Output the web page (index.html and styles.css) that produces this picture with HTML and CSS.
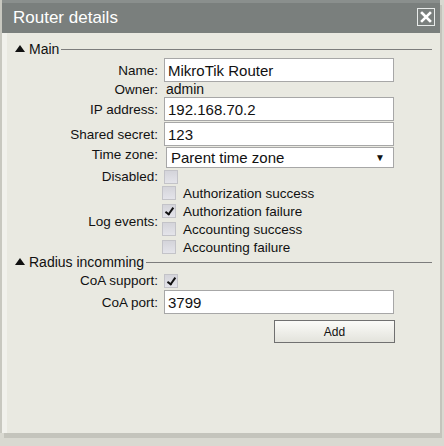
FILE: index.html
```html
<!DOCTYPE html>
<html lang="en">
  <head>
    <meta charset="UTF-8" />
    <title>Router details</title>
    <link rel="stylesheet" href="styles.css">
  </head>
  <body>
    <div class="window">
      <div class="window-title">
        <span>Router details</span>
        <span class="close-btn">
          <svg width="12" height="12" viewBox="0 0 12 12">
            <path d="M2 2 L10 10 M10 2 L2 10" stroke="#fff" stroke-width="2.6" stroke-linecap="square" />
          </svg>
        </span>
      </div>
      <div class="window-body">
        <div class="section-head">
          <svg class="arrow" width="10" height="7" viewBox="0 0 10 7"><path d="M0 7 L5 0 L10 7 Z" fill="#111" /></svg>
          <span class="section-name">Main</span><span class="rule"></span>
        </div>
        <div class="form-grid">
          <label class="lbl">Name:</label>
          <div class="field"><input class="text" value="MikroTik Router" /></div>

          <label class="lbl small">Owner:</label>
          <div class="field small">admin</div>

          <label class="lbl">IP address:</label>
          <div class="field"><input class="text" value="192.168.70.2" /></div>

          <label class="lbl">Shared secret:</label>
          <div class="field"><input class="text" value="123" /></div>

          <label class="lbl sel">Time zone:</label>
          <div class="field sel">
            <div class="select"><span>Parent time zone</span><span class="caret">&#9660;</span></div>
          </div>

          <label class="lbl chk">Disabled:</label>
          <div class="field chk"><span class="box"></span></div>

          <label class="lbl">Log events:</label>
          <div class="field checklist">
            <div class="check-row"><span class="box"></span>Authorization success</div>
            <div class="check-row"><span class="box checked"></span>Authorization failure</div>
            <div class="check-row"><span class="box"></span>Accounting success</div>
            <div class="check-row"><span class="box"></span>Accounting failure</div>
          </div>
        </div>

        <div class="section-head second">
          <svg class="arrow" width="10" height="7" viewBox="0 0 10 7"><path d="M0 7 L5 0 L10 7 Z" fill="#111" /></svg>
          <span class="section-name">Radius incomming</span><span class="rule"></span>
        </div>
        <div class="form-grid second">
          <label class="lbl chk">CoA support:</label>
          <div class="field chk"><span class="box checked"></span></div>

          <label class="lbl">CoA port:</label>
          <div class="field"><input class="text" value="3799" /></div>
        </div>

        <div class="actions">
          <button class="btn">Add</button>
        </div>
      </div>
    </div>
  </body>
</html>
```

FILE: styles.css
```css
html {
  background-color: #d9d9d1;
}
body {
  margin: 0;
  height: 446px;
  font-family: "Liberation Sans", Arial, sans-serif;
  font-size: 14px;
  color: #111;
}
.window {
  margin-left: 2px;
  width: 438px;
  height: 433px;
  background-color: #e9e9e1;
  box-shadow: 2px 5px 0 #c4c4bc, -2px 0 0 #c8c8c0;
  display: flex;
  flex-direction: column;
}
.window-title {
  height: 30px;
  border-top: 3px solid #8a8f8d;
  background-color: #7a7f7d;
  color: #ffffff;
  font-size: 17px;
  display: flex;
  align-items: center;
  justify-content: space-between;
  padding: 0 5px 0 11px;
}
.close-btn {
  width: 16px;
  height: 16px;
  border: 1px solid #e8ebea;
  display: flex;
  align-items: center;
  justify-content: center;
  margin-top: -2px;
}
.window-body {
  flex: 1;
  padding: 8px 0 0 0;
  border-left: 5px solid #f1f1ec;
}
.section-head {
  display: flex;
  align-items: center;
  height: 16px;
  padding-left: 8px;
  margin-right: 8px;
}
.section-head.second {
  margin-top: -2px;
}
.arrow {
  margin-right: 4px;
  margin-top: -1px;
}
.section-name {
  font-size: 14px;
  margin-right: 2px;
}
.rule {
  flex: 1;
  border-top: 1px solid #7c7c7c;
  margin-top: 1px;
}
.form-grid {
  display: grid;
  grid-template-columns: 151px 230px;
  column-gap: 6px;
  row-gap: 1px;
  margin-top: 1px;
}
.form-grid.second {
  margin-top: 3px;
}
.lbl {
  text-align: right;
  align-self: center;
  font-size: 13.5px;
}
.field {
  display: flex;
  align-items: center;
}
.text {
  width: 230px;
  height: 24px;
  box-sizing: border-box;
  border: 1px solid #a7a7a7;
  background: #ffffff;
  font-family: "Liberation Sans", Arial, sans-serif;
  font-size: 15px;
  padding: 0 3px;
  color: #111;
  margin: 0;
}
.small {
  height: 13px;
  line-height: 13px;
  padding-left: 2px;
}
.lbl.small {
  padding-left: 0;
}
.sel {
  height: 21px;
}
.select {
  margin-left: 2px;
  width: 228px;
  height: 21px;
  box-sizing: border-box;
  border: 1px solid #a7a7a7;
  background: #ffffff;
  font-size: 15px;
  display: flex;
  align-items: center;
  justify-content: space-between;
  padding: 0 8px 0 4px;
}
.caret {
  font-size: 10px;
}
.chk {
  height: 16px;
}
.box {
  width: 14px;
  height: 14px;
  box-sizing: border-box;
  border: 1px solid #c3c3c8;
  background: linear-gradient(#d4d4da, #e4e4ea);
  display: inline-block;
  position: relative;
}
.box.checked::after {
  content: "";
  position: absolute;
  left: 4px;
  top: 1px;
  width: 3px;
  height: 7px;
  border-right: 2px solid #111;
  border-bottom: 2px solid #111;
  transform: rotate(35deg);
}
.checklist {
  flex-direction: column;
  align-items: flex-start;
  margin-left: -2px;
  margin-top: -2px;
  font-size: 13.5px;
}
.check-row {
  height: 18px;
  display: flex;
  align-items: center;
  gap: 7px;
}
.actions {
  display: flex;
  justify-content: flex-start;
  padding-left: 267px;
  margin-top: 6px;
}
.btn {
  width: 121px;
  height: 23px;
  border: 1px solid #707070;
  background: linear-gradient(#fbfbf8, #e3e3dc);
  font-family: "Liberation Sans", Arial, sans-serif;
  font-size: 12px;
  color: #111;
  padding: 0;
}
```
